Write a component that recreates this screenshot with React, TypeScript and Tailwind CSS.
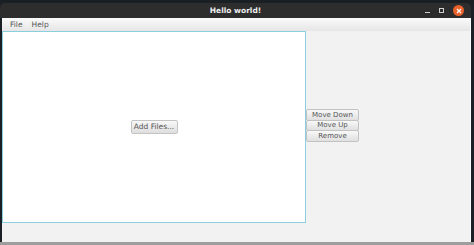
import React from 'react';

const font = { fontFamily: '"DejaVu Sans", "Liberation Sans", sans-serif' };

function SideButton({ label }: { label: string }) {
  return (
    <button className="w-[53px] h-[11.5px] flex items-center justify-center text-[7px] leading-none text-[#555] bg-gradient-to-b from-[#f8f8f8] to-[#e0e0e0] border border-[#c2c2c2] rounded-[2px] -mt-px first:mt-0">
      {label}
    </button>
  );
}

export default function App() {
  return (
    <div className="w-[474px] h-[245px] bg-[#1b2026] flex flex-col overflow-hidden" style={font}>
      <div className="h-[3px] bg-[#1a1f24]" />
      <div className="h-[15px] bg-[#2d2d2d] rounded-t-[5px] relative flex items-center justify-center mr-[3px]">
        <span className="text-[7.5px] font-bold text-[#ededed] leading-none">Hello world!</span>
        <div className="absolute right-[7px] top-0 h-full flex items-center gap-[9px]">
          <div className="w-[5px] h-px bg-[#cfcfcf] mt-[3px]" />
          <div className="w-[5px] h-[5px] border border-[#cfcfcf]" />
          <div className="w-[11px] h-[11px] rounded-full bg-[#e9622c] flex items-center justify-center">
            <svg width="6" height="6" viewBox="0 0 6 6">
              <path d="M1 1L5 5M5 1L1 5" stroke="#fff" strokeWidth="1.2" />
            </svg>
          </div>
        </div>
      </div>
      <div className="flex-1 flex flex-col ml-[2px] mr-[3px] bg-[#f2f2f2] border-r border-[#fafafa]">
        <div className="h-[13px] flex items-center gap-[9px] pl-[8px] bg-gradient-to-b from-[#fafafa] to-[#e6e6e6] text-[7.5px] text-[#555] leading-none">
          <span>File</span>
          <span>Help</span>
        </div>
        <div className="flex-1 flex items-start">
          <div className="w-[304px] h-[192px] bg-white border border-[#8ccfdc] flex items-center justify-center">
            <button className="w-[47px] h-[14px] flex items-center justify-center text-[7.5px] leading-none text-[#555] bg-gradient-to-b from-[#f8f8f8] to-[#dedede] border border-[#c4c4c4] rounded-[2px]">
              Add Files...
            </button>
          </div>
          <div className="h-[192px] flex flex-col justify-center pb-[3px]">
            <SideButton label="Move Down" />
            <SideButton label="Move Up" />
            <SideButton label="Remove" />
          </div>
        </div>
      </div>
      <div className="h-[3px] bg-[#9d9d9d]" />
    </div>
  );
}
